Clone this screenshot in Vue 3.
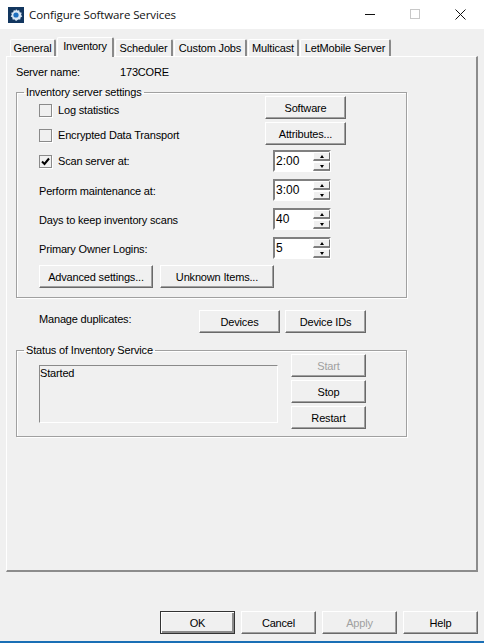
<template>
  <div class="dialog">
    <header class="titlebar">
      <svg class="app-icon" width="16" height="16" viewBox="0 0 16 16">
        <rect width="16" height="16" fill="#12365f" />
        <path d="M8 2l1.200 1.600 2-.4.500 2 2 .6-.6 2 1.100 1.700-1.700 1.100-.2 2-2-.1L8 14l-1.400-1.500-2 .1-.2-2-1.700-1.100L3.800 7.800l-.6-2 2-.6.500-2 2 .4z" fill="#d8e6f5" />
        <circle cx="8" cy="8" r="2.600" fill="#1d6fc0" />
      </svg>
      <span class="title">Configure Software Services</span>
      <div class="winctl">
        <svg width="11" height="11" viewBox="0 0 11 11"><path d="M0 5.500h10" stroke="#111" fill="none" /></svg>
        <svg width="11" height="11" viewBox="0 0 11 11"><rect x="0.500" y="0.500" width="9" height="9" stroke="#c8c8c8" fill="none" /></svg>
        <svg width="11" height="11" viewBox="0 0 11 11"><path d="M0.500 0.500l10 10M10.500 0.500l-10 10" stroke="#111" fill="none" /></svg>
      </div>
    </header>

    <div class="content">
      <nav class="tabs">
        <div
          v-for="tab in tabs"
          :key="tab.name"
          class="tab"
          :class="{ active: tab.name === 'Inventory' }"
          :style="{ width: tab.width + 'px' }"
        >{{ tab.name }}</div>
      </nav>

      <section class="page">
        <div class="server-row">
          <span class="server-label">Server name:</span>
          <span>173CORE</span>
        </div>

        <fieldset class="group settings">
          <legend>Inventory server settings</legend>
          <div class="settings-grid">
            <label class="check first"><span class="box"></span>Log statistics</label>
            <button class="btn wide">Software</button>

            <label class="check second"><span class="box"></span>Encrypted Data Transport</label>
            <button class="btn wide">Attributes...</button>

            <template v-for="row in spinRows" :key="row.value">
              <label v-if="row.checked" class="check">
                <span class="box">
                  <svg width="9" height="9" viewBox="0 0 9 9"><path d="M1 4.500l2.500 2.500L8 1.500" stroke="#000" stroke-width="2" fill="none" /></svg>
                </span>{{ row.label }}
              </label>
              <span v-else class="plain">{{ row.label }}</span>
              <div class="spin">
                <span class="spin-value">{{ row.value }}</span>
                <div class="spin-btns">
                  <span class="spin-btn"><i class="up"></i></span>
                  <span class="spin-btn"><i class="down"></i></span>
                </div>
              </div>
            </template>
          </div>
          <div class="advanced">
            <button class="btn adv">Advanced settings...</button>
            <button class="btn unk">Unknown Items...</button>
          </div>
        </fieldset>

        <div class="duplicates">
          <span class="dup-label">Manage duplicates:</span>
          <button class="btn dup">Devices</button>
          <button class="btn dup">Device IDs</button>
        </div>

        <fieldset class="group status">
          <legend>Status of Inventory Service</legend>
          <div class="status-box">Started</div>
          <div class="status-btns">
            <button class="btn svc disabled">Start</button>
            <button class="btn svc">Stop</button>
            <button class="btn svc">Restart</button>
          </div>
        </fieldset>
      </section>

      <footer class="actions">
        <button class="btn act default">OK</button>
        <button class="btn act">Cancel</button>
        <button class="btn act disabled">Apply</button>
        <button class="btn act">Help</button>
      </footer>
    </div>
    <div class="bottom-line"></div>
  </div>
</template>

<script setup>
const tabs = [
  { name: 'General', width: 46 },
  { name: 'Inventory', width: 57 },
  { name: 'Scheduler', width: 58 },
  { name: 'Custom Jobs', width: 73 },
  { name: 'Multicast', width: 51 },
  { name: 'LetMobile Server', width: 91 },
]

const spinRows = [
  { label: 'Scan server at:', value: '2:00', checked: true },
  { label: 'Perform maintenance at:', value: '3:00' },
  { label: 'Days to keep inventory scans', value: '40' },
  { label: 'Primary Owner Logins:', value: '5' },
]
</script>

<style>
html, body {
  margin: 0;
  background: #f0f0f0;
}
</style>

<style scoped>
.dialog {
  width: 484px;
  height: 643px;
  display: flex;
  flex-direction: column;
  background: #f0f0f0;
  font-family: "Liberation Sans", Arial, sans-serif;
  font-size: 11px;
  letter-spacing: -0.17px;
  color: #000;
  overflow: hidden;
}

.titlebar {
  height: 29px;
  flex: none;
  display: flex;
  align-items: center;
  background: #fff;
  padding-left: 8px;
}
.app-icon {
  margin-right: 5px;
}
.title {
  font-family: "Open Sans", sans-serif;
  font-size: 11.5px;
  letter-spacing: -0.1px;
  color: #111;
}
.winctl {
  margin-left: auto;
  display: flex;
  gap: 34px;
  padding-right: 18px;
}

.content {
  flex: 1;
  padding: 8px 6px 0;
  display: flex;
  flex-direction: column;
}

.tabs {
  display: flex;
  height: 19px;
  padding-left: 4px;
  gap: 1px;
  align-items: flex-end;
  position: relative;
  z-index: 1;
}
.tab {
  height: 17px;
  box-sizing: border-box;
  text-align: center;
  line-height: 17px;
  white-space: nowrap;
  border: 1px solid #fff;
  border-bottom: none;
  border-right: 2px solid #8a8a8a;
  border-radius: 2px 2px 0 0;
}
.tab.active {
  height: 20px;
  line-height: 17px;
  background: #f0f0f0;
  margin-bottom: -1px;
}

.page {
  width: 472px;
  height: 516px;
  box-sizing: border-box;
  border: 1px solid #fff;
  border-right: 2px solid #8c8c8c;
  border-bottom: 2px solid #8c8c8c;
  padding: 8px 0 0 9px;
  flex: none;
}

.server-row {
  display: flex;
  height: 15px;
  line-height: 15px;
}
.server-label {
  width: 104px;
}

.group {
  margin: 0;
  padding: 0;
  width: 391px;
  box-sizing: border-box;
  border: 1px solid #a0a0a0;
  box-shadow: 1px 1px 0 #fff, inset 1px 1px 0 #fff;
  min-inline-size: 0;
}
.group legend {
  margin-left: -15px;
  padding: 0 2px;
  line-height: 14px;
}

.settings {
  margin-top: 5px;
  height: 213px;
  padding: 0 0 0 22px;
}
.settings-grid {
  display: grid;
  grid-template-columns: 226px 80px;
  grid-template-rows: 26px 28px 29px 29px 29px 22px;
  margin-top: -3px;
}
.settings-grid > .spin {
  margin-left: 8px;
}

.check, .plain {
  display: flex;
  align-items: center;
  height: 22px;
}
.plain {
  margin-top: 1px;
}
.check.first {
  margin-top: 3px;
}
.check.second {
  margin-top: 2px;
}
.box {
  width: 11px;
  height: 11px;
  margin-right: 6px;
  background: #f0f0f0;
  border: 1px solid #8a8a8a;
  box-shadow: 1px 1px 0 #fff;
  display: flex;
  align-items: center;
  justify-content: center;
}

.btn {
  box-sizing: border-box;
  height: 23px;
  padding: 0;
  margin: 0;
  font: inherit;
  letter-spacing: inherit;
  color: #000;
  background: #f0f0f0;
  border: 1px solid;
  border-color: #fff #696969 #696969 #fff;
  box-shadow: inset -1px -1px 0 #a0a0a0;
}
.btn.disabled {
  color: #a0a0a0;
}
.btn.default {
  outline: 1px solid #333;
  outline-offset: -1px;
  box-shadow: inset 1px 1px 0 #fff, inset -2px -2px 0 #8a8a8a;
}
.wide {
  width: 81px;
}

.spin {
  width: 58px;
  height: 22px;
  box-sizing: border-box;
  display: flex;
  background: #fff;
  border: 2px solid #808080;
  border-right-color: #fff;
  border-bottom-color: #fff;
}
.spin-value {
  flex: 1;
  font-size: 12px;
  letter-spacing: 0;
  line-height: 19px;
  padding-left: 1px;
}
.spin-btns {
  display: flex;
  flex-direction: column;
  width: 17px;
  margin-bottom: -1px;
  margin-right: -1px;
  gap: 1px;
}
.spin-btn {
  flex: 1;
  background: #f0f0f0;
  border-right: 1px solid #696969;
  border-bottom: 2px solid #808080;
  border-top: 1px solid #fff;
  border-left: 1px solid #fff;
  display: flex;
  align-items: center;
  justify-content: center;
}
.up, .down {
  width: 0;
  height: 0;
  border-left: 2.500px solid transparent;
  border-right: 2.500px solid transparent;
}
.up {
  border-bottom: 3px solid #000;
}
.down {
  border-top: 3px solid #000;
}

.advanced {
  display: flex;
  gap: 7px;
  margin-top: 6px;
}
.adv {
  width: 114px;
}
.unk {
  width: 114px;
}

.duplicates {
  display: flex;
  align-items: flex-start;
  margin-top: 12px;
  padding-left: 23px;
}
.dup-label {
  width: 160px;
  line-height: 15px;
  margin-top: 2px;
}
.dup {
  width: 81px;
  margin-right: 5px;
}

.status {
  margin-top: 10px;
  height: 94px;
  padding: 0 0 0 22px;
  display: flex;
}
.status-box {
  width: 239px;
  height: 58px;
  box-sizing: border-box;
  margin-top: 8px;
  border: 1px solid #8a8a8a;
  border-right-color: #fff;
  border-bottom-color: #fff;
  line-height: 15px;
}
.status-btns {
  display: flex;
  flex-direction: column;
  gap: 3px;
  margin-left: 13px;
  margin-top: -3px;
}
.svc {
  width: 75px;
}

.actions {
  display: flex;
  gap: 6px;
  margin-top: 39px;
  padding-left: 154px;
}
.act {
  width: 75px;
}

.bottom-line {
  height: 2px;
  flex: none;
  background: #1a6fb5;
}
</style>
